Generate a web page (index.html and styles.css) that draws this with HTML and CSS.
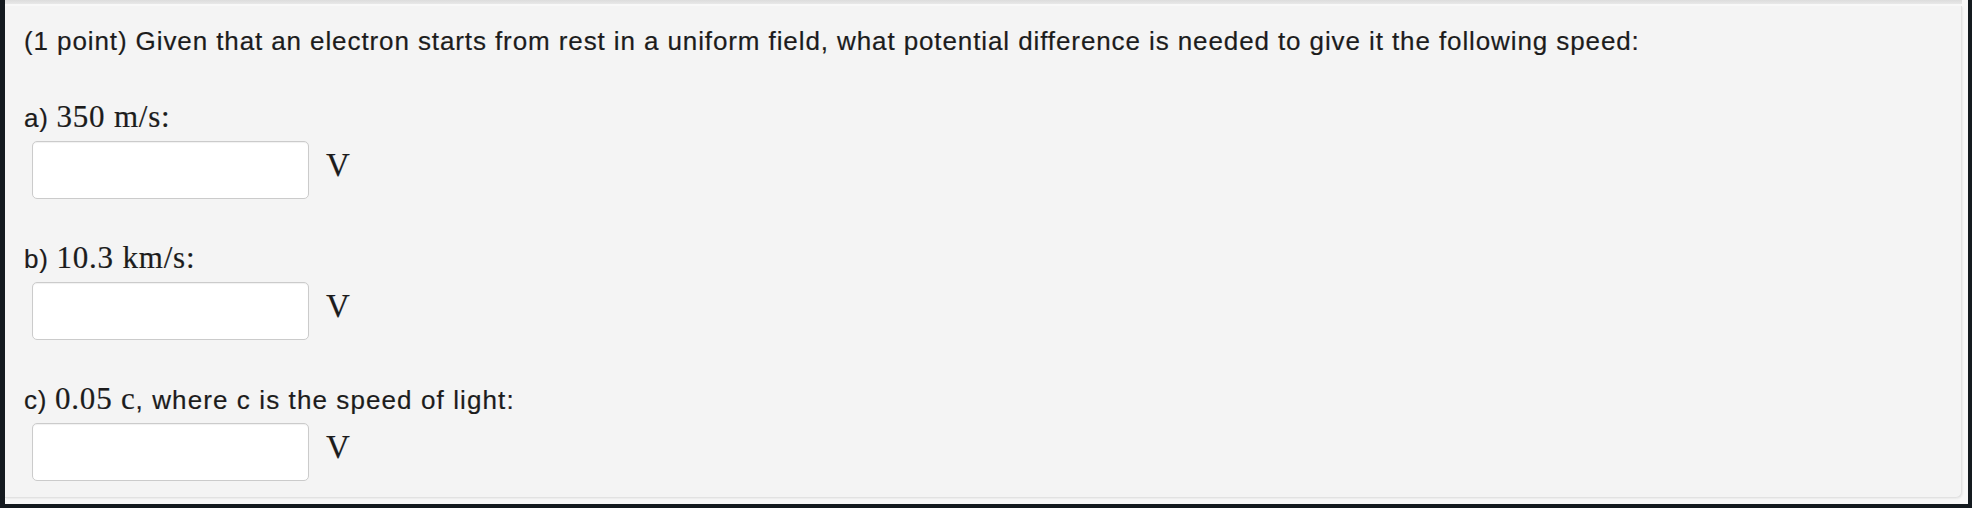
FILE: index.html
```html
<!DOCTYPE html>
<html>
<head>
<meta charset="utf-8">
<link rel="stylesheet" href="styles.css">
</head>
<body>
<div class="page">
  <div class="topbar"></div>
  <div class="panel">
    <p class="title">(1 point) Given that an electron starts from rest in a uniform field, what potential difference is needed to give it the following speed:</p>
    <div class="item">
      <div class="label">a) <span class="math">350 m/s:</span></div>
      <div class="answer"><div class="field"></div><span class="unit">V</span></div>
    </div>
    <div class="item">
      <div class="label">b) <span class="math">10.3 km/s:</span></div>
      <div class="answer"><div class="field"></div><span class="unit">V</span></div>
    </div>
    <div class="item">
      <div class="label">c) <span class="math">0.05 c</span><span class="wide">, where c is the speed of light:</span></div>
      <div class="answer"><div class="field"></div><span class="unit">V</span></div>
    </div>
  </div>
</div>
</body>
</html>
```
FILE: styles.css
```css
html, body {
  margin: 0;
  padding: 0;
}
body {
  background: #141a1f;
  width: 1972px;
  height: 508px;
  overflow: hidden;
  font-family: "Liberation Sans", Arial, sans-serif;
  color: #1c1c1c;
  -webkit-text-stroke: 0.2px #1c1c1c;
}
.page {
  margin-left: 5px;
  width: 1963px;
  height: 504px;
  background: #f8f8f8;
  display: flex;
  flex-direction: column;
}
.topbar {
  height: 4px;
  margin-right: 6px;
  background: linear-gradient(#dcdcdc, #e8e8e8);
}
.panel {
  box-sizing: border-box;
  margin-top: 2px;
  margin-right: 6px;
  height: 492px;
  background: #f4f4f4;
  border-right: 1px solid #e2e2e2;
  border-bottom: 1px solid #e2e2e2;
  border-radius: 0 0 6px 0;
  box-shadow: 1px 1px 2px rgba(0, 0, 0, 0.06);
  padding: 20px 0 0 19px;
}
.title {
  margin: 0;
  font-size: 26px;
  letter-spacing: 0.9px;
  line-height: 30px;
}
.item {
  margin-top: 42px;
}
.item:first-of-type {
  margin-top: 44px;
}
.label {
  font-size: 26px;
  letter-spacing: 0.7px;
  line-height: 36px;
  height: 36px;
}
.wide {
  letter-spacing: 1.1px;
}
.math {
  font-family: "Liberation Serif", "Times New Roman", serif;
  font-size: 31px;
  letter-spacing: 0.8px;
  line-height: 31px;
}
.answer {
  display: flex;
  align-items: flex-start;
  margin-top: 5px;
  padding-left: 8px;
}
.field {
  box-sizing: border-box;
  width: 277px;
  height: 58px;
  background: #fff;
  border: 1px solid #cbcbcb;
  border-radius: 5px;
  box-shadow: inset 0 1px 1px rgba(0, 0, 0, 0.06);
  -webkit-text-stroke: 0;
}
.unit {
  font-family: "Liberation Serif", "Times New Roman", serif;
  font-size: 33px;
  line-height: 33px;
  margin-left: 17px;
  margin-top: 8px;
}
```
